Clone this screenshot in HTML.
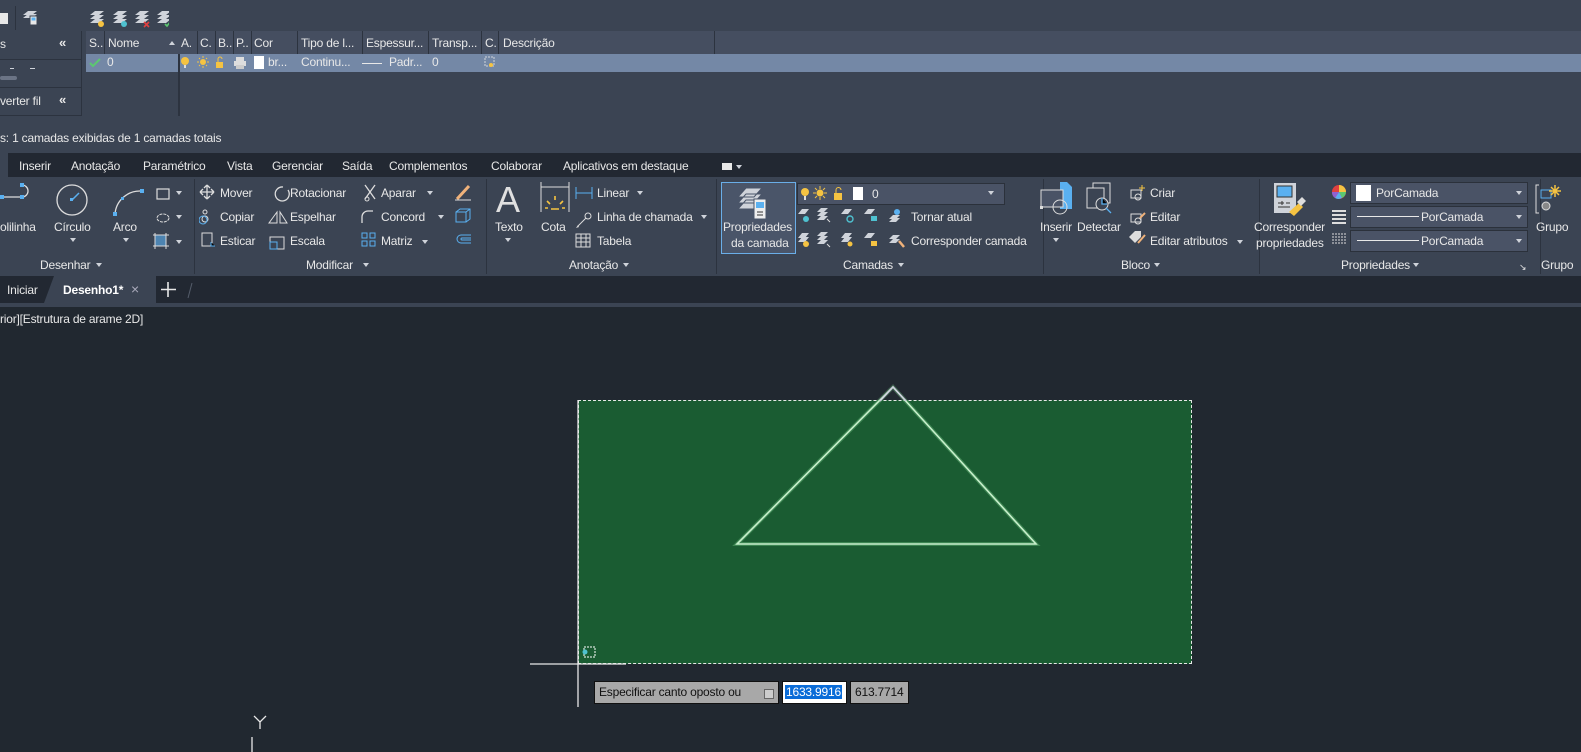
<!DOCTYPE html>
<html><head><meta charset="utf-8">
<style>
*{margin:0;padding:0;box-sizing:border-box}
body{width:1581px;height:752px;overflow:hidden;background:#212830;font-family:"Liberation Sans",sans-serif;font-size:12px;color:#e8e8e8;position:relative;letter-spacing:-0.2px}
.a{position:absolute}
.t{position:absolute;white-space:nowrap;line-height:14px}
.ic{position:absolute}
.dd{position:absolute;background:#4a5366;border:1px solid #2b313b}
.arr{position:absolute;width:0;height:0;border-left:3px solid transparent;border-right:3px solid transparent;border-top:4px solid #cfd3da}
.vl{position:absolute;width:1px;background:#2c333f}
</style></head><body>
<div class="a" style="left:0;top:0;width:1581px;height:153px;background:#3b4453"></div>
<div class="a" style="left:0;top:13px;width:8px;height:11px;background:#e8e8e8"></div>
<div class="a" style="left:15px;top:6px;width:1px;height:24px;background:#2c333f"></div>
<svg class="ic" style="left:22px;top:10px" width="18" height="16"><path d="M1 5 6 1h9L10 5z M1 8 6 4h9L10 8z" fill="#cfd3da"/><rect x="8" y="6" width="7" height="9" fill="#e8e8e8" stroke="#3b4453"/><rect x="9.5" y="7.5" width="4" height="3" fill="#5ab0f0"/></svg>
<svg class="ic" style="left:89px;top:10px" width="80" height="18"><g fill="#cfd3da"><path d="M1 5 6 1h9L10 5zM1 9 6 5h9L10 9zM1 13 6 9h9l-5 4z"/><path d="M24 5 29 1h9l-5 4zM24 9 29 5h9l-5 4zM24 13 29 9h9l-5 4z"/><path d="M46 5 51 1h9l-5 4zM46 9 51 5h9l-5 4zM46 13 51 9h9l-5 4z"/><path d="M68 5 73 1h9l-5 4zM68 9 73 5h9l-5 4zM68 13 73 9h9l-5 4z"/></g><circle cx="12" cy="14" r="3" fill="#f5c342"/><circle cx="35" cy="14" r="3" fill="#4fc1d0"/><path d="M55 12l5 5M60 12l-5 5" stroke="#e04040" stroke-width="1.6"/><path d="M76 14l2 2 4-5" stroke="#5cc870" stroke-width="1.6" fill="none"/></svg>
<div class="a" style="left:0;top:31px;width:82px;height:85px;border-right:1px solid #2c333f;border-bottom:1px solid #2c333f"></div>
<div class="a" style="left:0;top:59px;width:82px;height:1px;background:#2c333f"></div>
<div class="a" style="left:0;top:87px;width:82px;height:1px;background:#2c333f"></div>
<div class="t" style="left:0;top:37px">s</div>
<div class="t" style="left:59px;top:36px;font-weight:bold;font-size:13px">«</div>
<div class="a" style="left:0;top:76px;width:17px;height:4px;background:#6b7485;border-radius:2px"></div>
<div class="a" style="left:10px;top:68px;width:4px;height:1px;background:#cfd3da"></div><div class="a" style="left:30px;top:68px;width:5px;height:1px;background:#cfd3da"></div>
<div class="t" style="left:0;top:94px">verter fil</div>
<div class="t" style="left:59px;top:93px;font-weight:bold;font-size:13px">«</div>
<div class="a" style="left:86px;top:31px;width:1495px;height:23px;background:#454e60"></div>
<div class="a" style="left:86px;top:54px;width:1495px;height:18px;background:#7488a6"></div>
<div class="a" style="left:178px;top:54px;width:2px;height:62px;background:#2c333f"></div>
<div class="vl" style="left:104px;top:31px;height:23px"></div>
<div class="vl" style="left:197px;top:31px;height:23px"></div><div class="vl" style="left:215px;top:31px;height:23px"></div>
<div class="vl" style="left:233px;top:31px;height:23px"></div><div class="vl" style="left:251px;top:31px;height:23px"></div>
<div class="vl" style="left:297px;top:31px;height:23px"></div><div class="vl" style="left:362px;top:31px;height:23px"></div>
<div class="vl" style="left:428px;top:31px;height:23px"></div><div class="vl" style="left:481px;top:31px;height:23px"></div>
<div class="vl" style="left:498px;top:31px;height:23px"></div><div class="vl" style="left:714px;top:31px;height:23px"></div>
<div class="t" style="left:89px;top:36px">S..</div>
<div class="t" style="left:108px;top:36px">Nome</div>
<div class="a" style="left:169px;top:41px;width:0;height:0;border-left:3px solid transparent;border-right:3px solid transparent;border-bottom:4px solid #cfd3da"></div>
<div class="t" style="left:181px;top:36px">A.</div><div class="t" style="left:200px;top:36px">C.</div>
<div class="t" style="left:218px;top:36px">B..</div><div class="t" style="left:236px;top:36px">P..</div>
<div class="t" style="left:254px;top:36px">Cor</div><div class="t" style="left:301px;top:36px">Tipo de l...</div>
<div class="t" style="left:366px;top:36px">Espessur...</div><div class="t" style="left:432px;top:36px">Transp...</div>
<div class="t" style="left:485px;top:36px">C.</div><div class="t" style="left:503px;top:36px">Descrição</div>
<svg class="ic" style="left:88px;top:56px" width="14" height="14"><path d="M2 7l3 3 7-7" stroke="#5cc870" stroke-width="2" fill="none"/></svg>
<div class="t" style="left:107px;top:55px">0</div>
<svg class="ic" style="left:180px;top:55px" width="70" height="16"><circle cx="5" cy="6" r="4" fill="#f5c342"/><rect x="4" y="10" width="2" height="3" fill="#ddd"/><circle cx="23" cy="7" r="3" fill="#f5c342"/><path d="M23 1v2M23 11v2M17 7h2M27 7h2M19 3l1 1M27 3l-1 1M19 11l1-1M27 11l-1-1" stroke="#f5c342"/><rect x="36" y="7" width="7" height="6" fill="#f5c342"/><path d="M38 7V4a2 2 0 0 1 4 0" stroke="#f5c342" fill="none"/><rect x="54" y="6" width="12" height="5" fill="#ddd"/><rect x="56" y="2" width="8" height="4" fill="#ddd"/><rect x="56" y="10" width="8" height="4" fill="#ccc"/></svg>
<div class="a" style="left:254px;top:56px;width:10px;height:13px;background:#fff"></div>
<div class="t" style="left:268px;top:55px">br...</div>
<div class="t" style="left:301px;top:55px">Continu...</div>
<div class="a" style="left:362px;top:63px;width:20px;height:1px;background:#e8e8e8"></div>
<div class="t" style="left:389px;top:55px">Padr...</div>
<div class="t" style="left:432px;top:55px">0</div>
<svg class="ic" style="left:484px;top:55px" width="12" height="14"><rect x="1" y="2" width="9" height="9" fill="none" stroke="#cfd3da" stroke-dasharray="2 1"/><circle cx="7" cy="10" r="2" fill="#f5c342"/></svg>
<div class="t" style="left:0;top:131px">s: 1 camadas exibidas de 1 camadas totais</div>
<div class="a" style="left:0;top:153px;width:1581px;height:24px;background:#222832"></div>
<div class="a" style="left:0;top:153px;width:8px;height:24px;background:#3b4453"></div>
<div class="t" style="left:19px;top:159px">Inserir</div><div class="t" style="left:71px;top:159px">Anotação</div>
<div class="t" style="left:143px;top:159px">Paramétrico</div><div class="t" style="left:227px;top:159px">Vista</div>
<div class="t" style="left:272px;top:159px">Gerenciar</div><div class="t" style="left:342px;top:159px">Saída</div>
<div class="t" style="left:389px;top:159px">Complementos</div><div class="t" style="left:491px;top:159px">Colaborar</div>
<div class="t" style="left:563px;top:159px">Aplicativos em destaque</div>
<div class="a" style="left:722px;top:163px;width:10px;height:7px;background:#e8e8e8"></div><div class="arr" style="left:736px;top:165px"></div>
<div class="a" style="left:0;top:177px;width:1581px;height:99px;background:#3b4453"></div>
<div class="vl" style="left:194px;top:179px;height:95px"></div><div class="vl" style="left:486px;top:179px;height:95px"></div>
<div class="vl" style="left:716px;top:179px;height:95px"></div><div class="vl" style="left:1043px;top:179px;height:95px"></div>
<div class="vl" style="left:1259px;top:179px;height:95px"></div><div class="vl" style="left:1540px;top:179px;height:95px"></div>
<svg class="ic" style="left:0;top:182px" width="185" height="50"><path d="M2 15h20a6 6 0 0 0 0-12" stroke="#ddd" fill="none" stroke-width="1.3"/><rect x="0" y="13" width="4" height="4" fill="#5ab0f0"/><rect x="20" y="13" width="4" height="4" fill="#5ab0f0"/><rect x="20" y="1" width="4" height="4" fill="#5ab0f0"/><circle cx="72" cy="18" r="15" stroke="#ddd" fill="none" stroke-width="1.3"/><path d="M72 18l7-7" stroke="#5ab0f0" stroke-width="1.5"/><rect x="70" y="16" width="3" height="3" fill="#5ab0f0"/><path d="M115 32a25 25 0 0 1 26-23" stroke="#ddd" fill="none" stroke-width="1.3"/><rect x="113" y="30" width="4" height="4" fill="#5ab0f0"/><rect x="121" y="15" width="3" height="3" fill="#5ab0f0"/><rect x="140" y="7" width="4" height="4" fill="#5ab0f0"/><rect x="157" y="7" width="12" height="10" fill="none" stroke="#ddd" stroke-width="1.2"/><ellipse cx="163" cy="36" rx="6" ry="4" fill="none" stroke="#ddd" stroke-dasharray="3 1"/></svg>
<svg class="ic" style="left:153px;top:233px" width="16" height="16"><rect x="2" y="2" width="11" height="11" fill="#5ab0f0" opacity=".6" stroke="#ddd"/><path d="M0 2h16M0 13h16M2 0v16M13 0v16" stroke="#ddd"/></svg>
<div class="arr" style="left:176px;top:191px"></div><div class="arr" style="left:176px;top:215px"></div><div class="arr" style="left:176px;top:240px"></div>
<div class="t" style="left:0;top:220px">olilinha</div><div class="t" style="left:54px;top:220px">Círculo</div><div class="t" style="left:113px;top:220px">Arco</div>
<div class="arr" style="left:70px;top:238px"></div><div class="arr" style="left:123px;top:238px"></div>
<div class="t" style="left:40px;top:258px">Desenhar</div><div class="arr" style="left:96px;top:263px"></div>
<svg class="ic" style="left:199px;top:184px" width="280" height="66"><path d="M8 1v14M1 8h14M8 1l-3 3M8 1l3 3M8 15l-3-3M8 15l3-3M1 8l3-3M1 8l3 3M15 8l-3-3M15 8l-3 3" stroke="#ddd" stroke-width="1.3" fill="none"/><circle cx="6" cy="35" r="3" fill="none" stroke="#ddd"/><circle cx="6" cy="28" r="2" fill="none" stroke="#ddd"/><circle cx="4" cy="36" r="4" fill="none" stroke="#5ab0f0"/><rect x="3" y="49" width="10" height="13" fill="none" stroke="#ddd"/><path d="M12 58v4h4" stroke="#5ab0f0"/><path d="M84 3a7 7 0 1 0 5 3" stroke="#ddd" stroke-width="1.3" fill="none"/><path d="M78 28l-8 11h8zM81 28v11h7z" fill="none" stroke="#ddd"/><rect x="71" y="53" width="14" height="12" fill="none" stroke="#ddd"/><rect x="71" y="58" width="7" height="7" fill="none" stroke="#5ab0f0"/><path d="M166 1l10 14M176 1l-10 14" stroke="#ddd" stroke-width="1.3"/><circle cx="168" cy="15" r="2" stroke="#ddd" fill="none"/><path d="M163 39v-6a6 6 0 0 1 6-6h5" stroke="#ddd" fill="none" stroke-width="1.3"/><rect x="163" y="49" width="5" height="5" fill="none" stroke="#5ab0f0"/><rect x="171" y="49" width="5" height="5" fill="none" stroke="#5ab0f0"/><rect x="163" y="57" width="5" height="5" fill="none" stroke="#5ab0f0"/><rect x="171" y="57" width="5" height="5" fill="none" stroke="#5ab0f0"/><path d="M258 15l12-13" stroke="#f0b27a" stroke-width="3"/><path d="M256 16h16" stroke="#ddd"/><rect x="257" y="28" width="10" height="10" fill="none" stroke="#5ab0f0"/><path d="M257 28l4-3h10v10l-4 3M267 28l4-3" fill="none" stroke="#5ab0f0"/><path d="M272 51h-10a4 4 0 0 0 0 8h10M272 54h-9a1 1 0 0 0 0 2h9" fill="none" stroke="#5ab0f0"/></svg>
<div class="t" style="left:220px;top:186px">Mover</div><div class="t" style="left:220px;top:210px">Copiar</div><div class="t" style="left:220px;top:234px">Esticar</div>
<div class="t" style="left:290px;top:186px">Rotacionar</div><div class="t" style="left:290px;top:210px">Espelhar</div><div class="t" style="left:290px;top:234px">Escala</div>
<div class="t" style="left:381px;top:186px">Aparar</div><div class="t" style="left:381px;top:210px">Concord</div><div class="t" style="left:381px;top:234px">Matriz</div>
<div class="arr" style="left:427px;top:191px"></div><div class="arr" style="left:438px;top:215px"></div><div class="arr" style="left:422px;top:240px"></div>
<div class="t" style="left:306px;top:258px">Modificar</div><div class="arr" style="left:363px;top:263px"></div>
<div class="t" style="left:496px;top:182px;font-size:36px;line-height:36px;color:#e0e0e0">A</div>
<svg class="ic" style="left:540px;top:182px" width="210" height="70"><path d="M1 0v30M29 0v30M1 5h28" stroke="#ddd" fill="none"/><path d="M10 22l-3-3M20 22l3-3M15 18v-4M8 26h-3M22 26h3M11 27h8" stroke="#f5c342" stroke-width="1.6"/><path d="M36 5v12M52 5v12M36 11h16" stroke="#5ab0f0"/><path d="M38 44l8-8" stroke="#ddd"/><circle cx="48" cy="34" r="3" stroke="#ddd" fill="none"/><path d="M36 46l3-1-1-2z" fill="#ddd"/><rect x="36" y="52" width="14" height="13" fill="none" stroke="#ddd"/><path d="M36 56h14M36 60h14M41 52v13M46 52v13" stroke="#ddd"/></svg>
<div class="t" style="left:495px;top:220px">Texto</div><div class="arr" style="left:505px;top:238px"></div>
<div class="t" style="left:541px;top:220px">Cota</div>
<div class="t" style="left:597px;top:186px">Linear</div><div class="arr" style="left:637px;top:191px"></div>
<div class="t" style="left:597px;top:210px">Linha de chamada</div><div class="arr" style="left:701px;top:215px"></div>
<div class="t" style="left:597px;top:234px">Tabela</div>
<div class="t" style="left:569px;top:258px">Anotação</div><div class="arr" style="left:623px;top:263px"></div>
<div class="a" style="left:721px;top:182px;width:75px;height:72px;background:#4a5569;border:1px solid #6aaee8"></div>
<svg class="ic" style="left:736px;top:185px" width="36" height="36"><path d="M2 12 10 3h16l-8 9zM2 18l8-9h16l-8 9zM2 24l8-9h16l-8 9z" fill="#cfd3da" stroke="#4a5569"/><rect x="18" y="14" width="12" height="20" fill="#eee" stroke="#4a5569"/><rect x="20" y="17" width="8" height="6" fill="#5ab0f0"/><path d="M21 27h6M21 30h6" stroke="#333"/></svg>
<div class="t" style="left:723px;top:220px">Propriedades</div><div class="t" style="left:731px;top:236px">da camada</div>
<div class="dd" style="left:797px;top:183px;width:208px;height:22px"></div>
<svg class="ic" style="left:799px;top:185px" width="70" height="18"><circle cx="6" cy="7" r="4" fill="#f5c342"/><rect x="5" y="11" width="2" height="4" fill="#ddd"/><circle cx="21" cy="8" r="3.5" fill="#f5c342"/><path d="M21 1v3M21 12v3M14 8h3M25 8h3M16 3l2 2M26 3l-2 2M16 13l2-2M26 13l-2-2" stroke="#f5c342"/><rect x="35" y="8" width="8" height="7" fill="#f5c342"/><path d="M37 8V5a2.5 2.5 0 0 1 5 0" stroke="#f5c342" fill="none"/><rect x="54" y="2" width="10" height="13" fill="#fff"/></svg>
<div class="t" style="left:872px;top:187px">0</div><div class="arr" style="left:988px;top:191px"></div>
<svg class="ic" style="left:797px;top:207px" width="115" height="44"><g fill="#cfd3da"><path d="M1 7 5 2h7L8 7zM20 5l4-4h7l-4 4zM20 9l4-4h7l-4 4zM20 13l4-4h7l-4 4zM44 7l4-5h7l-4 5zM67 7l4-5h7l-4 5zM92 12l4-4h7l-4 4zM92 15l4-4h7l-4 4z"/><path d="M1 31l4-5h7l-4 5zM1 35l4-5h7l-4 5zM20 29l4-4h7l-4 4zM20 33l4-4h7l-4 4zM20 37l4-4h7l-4 4zM44 31l4-5h7l-4 5zM44 35l4-5h7l-4 5zM67 31l4-5h7l-4 5zM92 32l4-4h7l-4 4zM92 36l4-4h7l-4 4z"/></g><circle cx="9" cy="12" r="3" fill="#4fc1d0"/><path d="M30 12l3 3" stroke="#ddd"/><circle cx="53" cy="12" r="3" fill="none" stroke="#4fc1d0" stroke-width="1.4"/><rect x="74" y="9" width="6" height="5" fill="#4fc1d0"/><circle cx="100" cy="5" r="3" fill="#5ab0f0"/><circle cx="9" cy="37" r="3" fill="#f5c342"/><path d="M30 37l3 3" stroke="#ddd"/><circle cx="53" cy="37" r="2.5" fill="#f5c342"/><rect x="74" y="34" width="6" height="5" fill="#f5c342"/><path d="M102 34l5 6" stroke="#f0b27a" stroke-width="2.5"/></svg>
<div class="t" style="left:911px;top:210px">Tornar atual</div><div class="t" style="left:911px;top:234px">Corresponder camada</div>
<div class="t" style="left:843px;top:258px">Camadas</div><div class="arr" style="left:898px;top:263px"></div>
<svg class="ic" style="left:1040px;top:182px" width="130" height="70"><path d="M20 0h7l5 5v22H20z" fill="#5ab0f0"/><rect x="1" y="8" width="22" height="17" fill="#4a5366" stroke="#ddd"/><circle cx="20" cy="25" r="7" fill="none" stroke="#ddd"/><rect x="0" y="24" width="3" height="3" fill="#ddd"/><rect x="53" y="1" width="17" height="20" fill="none" stroke="#ddd"/><rect x="47" y="6" width="17" height="20" fill="#3b4453" stroke="#ddd"/><circle cx="62" cy="22" r="6" fill="#3b4453" stroke="#ddd"/><path d="M62 16v6h5M66 26l5 5" stroke="#5ab0f0" stroke-width="1.3"/><rect x="91" y="8" width="10" height="8" fill="none" stroke="#ddd"/><circle cx="98" cy="15" r="3" fill="none" stroke="#ddd"/><path d="M102 3v6M99 6h6" stroke="#f5c342"/><rect x="91" y="32" width="10" height="8" fill="none" stroke="#ddd"/><circle cx="98" cy="39" r="3" fill="none" stroke="#ddd"/><path d="M100 36l5-5" stroke="#f0b27a" stroke-width="2"/><path d="M89 55l6-6h6v6l-6 6z" fill="#ddd"/><path d="M98 61l7-8" stroke="#f0b27a" stroke-width="2"/></svg>
<div class="t" style="left:1040px;top:220px">Inserir</div><div class="arr" style="left:1053px;top:238px"></div>
<div class="t" style="left:1077px;top:220px">Detectar</div>
<div class="t" style="left:1150px;top:186px">Criar</div><div class="t" style="left:1150px;top:210px">Editar</div><div class="t" style="left:1150px;top:234px">Editar atributos</div>
<div class="arr" style="left:1237px;top:240px"></div>
<div class="t" style="left:1121px;top:258px">Bloco</div><div class="arr" style="left:1154px;top:263px"></div>
<svg class="ic" style="left:1273px;top:182px" width="80" height="70"><rect x="1" y="1" width="22" height="30" fill="#cfd3da"/><rect x="4" y="4" width="15" height="11" fill="#5ab0f0" stroke="#333"/><path d="M5 21h6M13 21h4M9 19v4M5 25h12" stroke="#333"/><path d="M16 30l10-9 4 4-9 9z" fill="#f5c342"/><path d="M24 20l5-5 4 4-5 5z" fill="#ddd"/><circle cx="66" cy="10" r="7" fill="#e04040"/><path d="M66 10V3a7 7 0 0 1 7 7z" fill="#f5c342"/><path d="M66 10h7a7 7 0 0 1-4 6z" fill="#5cc870"/><path d="M66 10l3 6a7 7 0 0 1-7 0z" fill="#5ab0f0"/><path d="M66 10l-4 6a7 7 0 0 1-3-6z" fill="#9060d0"/><path d="M59 29h14M59 33h14M59 37h14M59 41h14" stroke="#ddd" stroke-width="2"/><path d="M59 52h14M59 55h14M59 58h14M59 61h14" stroke="#ddd" stroke-dasharray="2 1"/></svg>
<div class="t" style="left:1254px;top:220px">Corresponder</div><div class="t" style="left:1256px;top:236px">propriedades</div>
<div class="dd" style="left:1350px;top:182px;width:178px;height:22px"></div>
<div class="a" style="left:1356px;top:185px;width:15px;height:16px;background:#fff"></div>
<div class="t" style="left:1376px;top:186px">PorCamada</div><div class="arr" style="left:1516px;top:191px"></div>
<div class="dd" style="left:1350px;top:206px;width:178px;height:22px"></div>
<div class="a" style="left:1357px;top:216px;width:62px;height:1px;background:#e8e8e8"></div>
<div class="t" style="left:1421px;top:210px">PorCamada</div><div class="arr" style="left:1516px;top:215px"></div>
<div class="dd" style="left:1350px;top:230px;width:178px;height:22px"></div>
<div class="a" style="left:1357px;top:240px;width:62px;height:1px;background:#e8e8e8"></div>
<div class="t" style="left:1421px;top:234px">PorCamada</div><div class="arr" style="left:1516px;top:239px"></div>
<div class="t" style="left:1341px;top:258px">Propriedades</div><div class="arr" style="left:1413px;top:263px"></div>
<div class="t" style="left:1519px;top:260px;font-size:9px">↘</div>
<svg class="ic" style="left:1535px;top:183px" width="46" height="32"><path d="M4 2H1v28h3" stroke="#ddd" fill="none"/><rect x="6" y="7" width="10" height="8" fill="none" stroke="#5ab0f0"/><circle cx="11" cy="23" r="4" fill="#888" stroke="#ddd"/><path d="M20 2v12M14 8h12M16 4l8 8M24 4l-8 8" stroke="#f5c342" stroke-width="1.5"/></svg>
<div class="t" style="left:1536px;top:220px">Grupo</div>
<div class="t" style="left:1541px;top:258px">Grupo</div>
<div class="a" style="left:0;top:276px;width:1581px;height:27px;background:#222832"></div>
<div class="t" style="left:7px;top:283px">Iniciar</div>
<svg class="ic" style="left:44px;top:276px" width="112" height="27"><path d="M0 27 10 0h102v27z" fill="#3b4453"/></svg>
<div class="t" style="left:63px;top:283px;font-weight:bold;color:#fff">Desenho1*</div>
<div class="t" style="left:131px;top:282px;color:#aab;font-size:14px">×</div>
<svg class="ic" style="left:160px;top:281px" width="34" height="18"><path d="M8 1v15M1 8.5h15" stroke="#e8e8e8" stroke-width="1.6"/><path d="M32 2l-4 15" stroke="#555d6b"/></svg>
<div class="a" style="left:0;top:303px;width:1581px;height:4px;background:#3b4453"></div>
<div class="t" style="left:0;top:312px">rior][Estrutura de arame 2D]</div>
<div class="a" style="left:578px;top:400px;width:614px;height:264px;background:#1a5c32;border:1px dashed #e8e8e8"></div>
<svg class="ic" style="left:0;top:0" width="1581" height="752"><polygon points="737,544 1036,544 893,387" fill="none" stroke="#7fd08f" stroke-width="4" opacity=".35"/><polygon points="737,544 1036,544 893,387" fill="none" stroke="#c8f0cc" stroke-width="1.6"/><path d="M880 401 893 387 906 401" fill="none" stroke="#d0d0e0" stroke-width="1.6"/><path d="M578 400V707M530 664H626" stroke="#e8e8e8" stroke-width="1.3"/><rect x="584" y="647" width="11" height="10" fill="#1a5c32" stroke="#fff" stroke-dasharray="2 1"/><circle cx="585" cy="652" r="2.5" fill="#4fc1d0"/><path d="M254 716L260 722L266 716M260 722V729M252 737v15" stroke="#e8e8e8" stroke-width="1.3" fill="none"/></svg>
<div class="a" style="left:594px;top:681px;width:185px;height:23px;background:#a8a8a8;border:1px solid #111"></div>
<div class="t" style="left:599px;top:685px;color:#111">Especificar canto oposto ou</div>
<div class="a" style="left:764px;top:689px;width:10px;height:10px;border:1px solid #666;background:#ccc"></div>
<div class="a" style="left:782px;top:681px;width:65px;height:23px;background:#fff;border:1px solid #111"></div>
<div class="t" style="left:785px;top:685px;background:#0a6cd8;color:#fff;padding:0 1px">1633.9916</div>
<div class="a" style="left:850px;top:681px;width:59px;height:23px;background:#a8a8a8;border:1px solid #111"></div>
<div class="t" style="left:855px;top:685px;color:#111">613.7714</div>
</body></html>
